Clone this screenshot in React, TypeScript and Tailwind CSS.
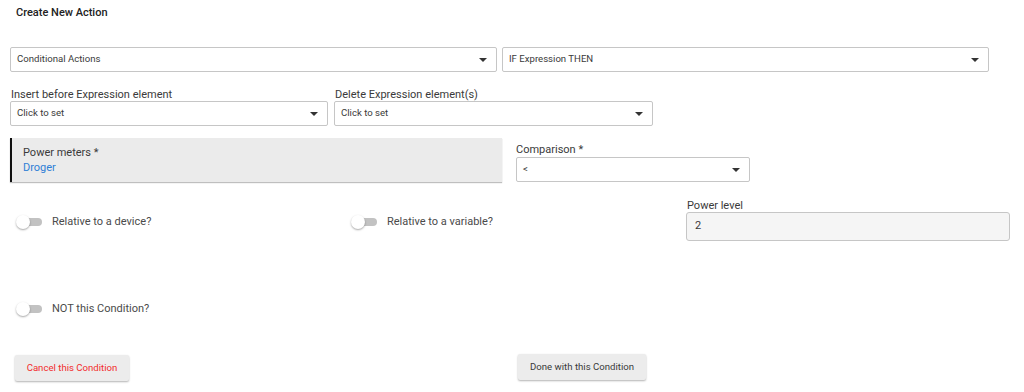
import React from 'react';

const font = { fontFamily: 'Roboto, "Liberation Sans", sans-serif' };

const Caret: React.FC = () => (
  <svg width="8" height="4" viewBox="0 0 8 4" className="shrink-0">
    <path d="M0 0 L8 0 L4 4 Z" fill="#333" />
  </svg>
);

const Select: React.FC<{ value: string; className?: string }> = ({ value, className }) => (
  <div
    className={`h-[25px] flex items-center justify-between pl-[6px] pr-[9px] border border-[#c6c6c6] rounded-[2px] bg-white text-[9.6px] text-[#3a3a3a] ${className ?? ''}`}
  >
    <span>{value}</span>
    <Caret />
  </div>
);

const Toggle: React.FC<{ label: string }> = ({ label }) => (
  <div className="flex items-center h-[14px]">
    <div className="relative w-[26px] h-[14px] shrink-0">
      <div className="absolute left-[4px] right-0 top-[3px] h-[8px] rounded-full bg-[#c2c2c2]" />
      <div className="absolute left-0 top-0 w-[14px] h-[14px] rounded-full bg-white shadow-[0_1px_2px_rgba(0,0,0,0.35)]" />
    </div>
    <span className="ml-[10px] text-[11px] text-[#4a4a4a]">{label}</span>
  </div>
);

const App: React.FC = () => {
  return (
    <div className="w-[1024px] h-[392px] bg-white px-[10px] pt-[5px]" style={font}>
      <div className="pl-[6px] h-[15px] leading-[15px] text-[11px] font-medium text-[#222]">Create New Action</div>

      {/* Action type */}
      <div className="flex gap-[5px] mt-[27px]">
        <Select value="Conditional Actions" className="w-[487px]" />
        <Select value="IF Expression THEN" className="w-[487px]" />
      </div>

      {/* Expression editing */}
      <div className="flex mt-[16px]">
        <div className="w-[318px]">
          <div className="h-[13px] leading-[13px] text-[11px] text-[#3a3a3a] pl-[1px]">Insert before Expression element</div>
          <Select value="Click to set" />
        </div>
        <div className="w-[319px] ml-[6px]">
          <div className="h-[13px] leading-[13px] text-[11px] text-[#3a3a3a] pl-[1px]">Delete Expression element(s)</div>
          <Select value="Click to set" />
        </div>
      </div>

      {/* Device + comparison */}
      <div className="flex mt-[12px]">
        <div className="w-[492px] h-[44px] bg-[#ebebeb] border-l-2 border-[#111] shadow-[0_1px_1px_rgba(0,0,0,0.25)] pl-[11px] pt-[8px] text-[11px] leading-[14px]">
          <div className="text-[#3a3a3a]">Power meters *</div>
          <div className="text-[#2f7fd6] mt-[1px]">Droger</div>
        </div>
        <div className="ml-[14px] pt-[5px]">
          <div className="h-[14px] leading-[14px] text-[11px] text-[#3a3a3a]">Comparison *</div>
          <Select value="<" className="w-[234px]" />
        </div>
      </div>

      {/* Relative options + power level */}
      <div className="flex">
        <div className="w-[341px] pl-[6px] pt-[33px]">
          <Toggle label="Relative to a device?" />
        </div>
        <div className="w-[335px] pt-[33px]">
          <Toggle label="Relative to a variable?" />
        </div>
        <div className="pt-[17px]">
          <div className="h-[13px] leading-[13px] text-[11px] text-[#3a3a3a] pl-[1px]">Power level</div>
          <div className="w-[324px] h-[29px] bg-[#f5f5f5] border border-[#c6c6c6] rounded-[3px] flex items-center pl-[8px] text-[11px] text-[#3a3a3a]">
            2
          </div>
        </div>
      </div>

      <div className="pl-[6px] mt-[61px]">
        <Toggle label="NOT this Condition?" />
      </div>

      {/* Actions */}
      <div className="flex mt-[38px]">
        <div className="w-[508px] pl-[5px]">
          <button className="w-[114px] h-[26px] bg-[#ececec] rounded-[2px] shadow-[0_1px_2px_rgba(0,0,0,0.3)] text-[9.6px] text-[#f22c2c]">
            Cancel this Condition
          </button>
        </div>
        <button className="w-[128px] h-[26px] bg-[#ececec] rounded-[2px] shadow-[0_1px_2px_rgba(0,0,0,0.3)] text-[9.6px] text-[#3a3a3a]">
          Done with this Condition
        </button>
      </div>
    </div>
  );
};

export default App;
